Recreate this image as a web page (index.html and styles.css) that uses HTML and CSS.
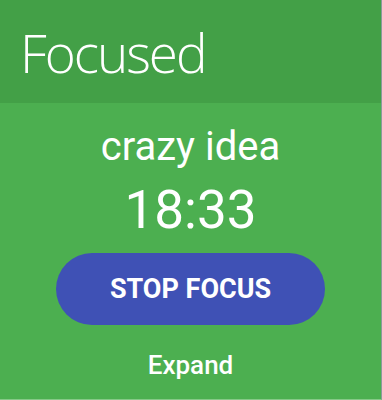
FILE: index.html
```html
<!DOCTYPE html>
<html lang="en">
<head>
    <meta charset="UTF-8">
    <meta name="viewport" content="width=device-width, initial-scale=1.0">
    <title>Focused</title>
    <link rel="stylesheet" href="styles.css">
</head>
<body>
    <div class="panel">
        <div class="header">
            <div class="title">Focused</div>
        </div>
        <div class="content">
            <div class="task-name">crazy idea</div>
            <div class="timer">18:33</div>
            <button class="stop-button">STOP FOCUS</button>
            <div class="expand">Expand</div>
        </div>
    </div>
</body>
</html>
```

FILE: styles.css
```css
body {
    margin: 0;
    font-family: Roboto, "Liberation Sans", sans-serif;
    background-color: #4caf50;
}
.panel {
    box-sizing: border-box;
    width: 382px;
    height: 400px;
    display: flex;
    flex-direction: column;
    background-color: #4caf50;
    border-right: 1px solid #8a9a9a;
    border-bottom: 1px solid #86c988;
    color: white;
}
.header {
    box-sizing: border-box;
    height: 103px;
    background-color: #43a047;
    padding: 26px 0 0 20px;
}
.title {
    font-family: "Open Sans", sans-serif;
    font-weight: 300;
    font-size: 53px;
    line-height: 53px;
    letter-spacing: -2px;
}
.content {
    display: flex;
    flex-direction: column;
    align-items: center;
}
.task-name {
    font-size: 40px;
    line-height: 48px;
    margin-top: 20px;
}
.timer {
    font-size: 53px;
    line-height: 60px;
    margin-top: 9px;
}
.stop-button {
    width: 269px;
    height: 72px;
    margin-top: 13px;
    border: none;
    border-radius: 36px;
    background-color: #3f51b5;
    color: white;
    font-family: Roboto, sans-serif;
    font-weight: bold;
    font-size: 27px;
}
.expand {
    font-size: 26px;
    line-height: 32px;
    font-weight: 500;
    margin-top: 24px;
}
```
